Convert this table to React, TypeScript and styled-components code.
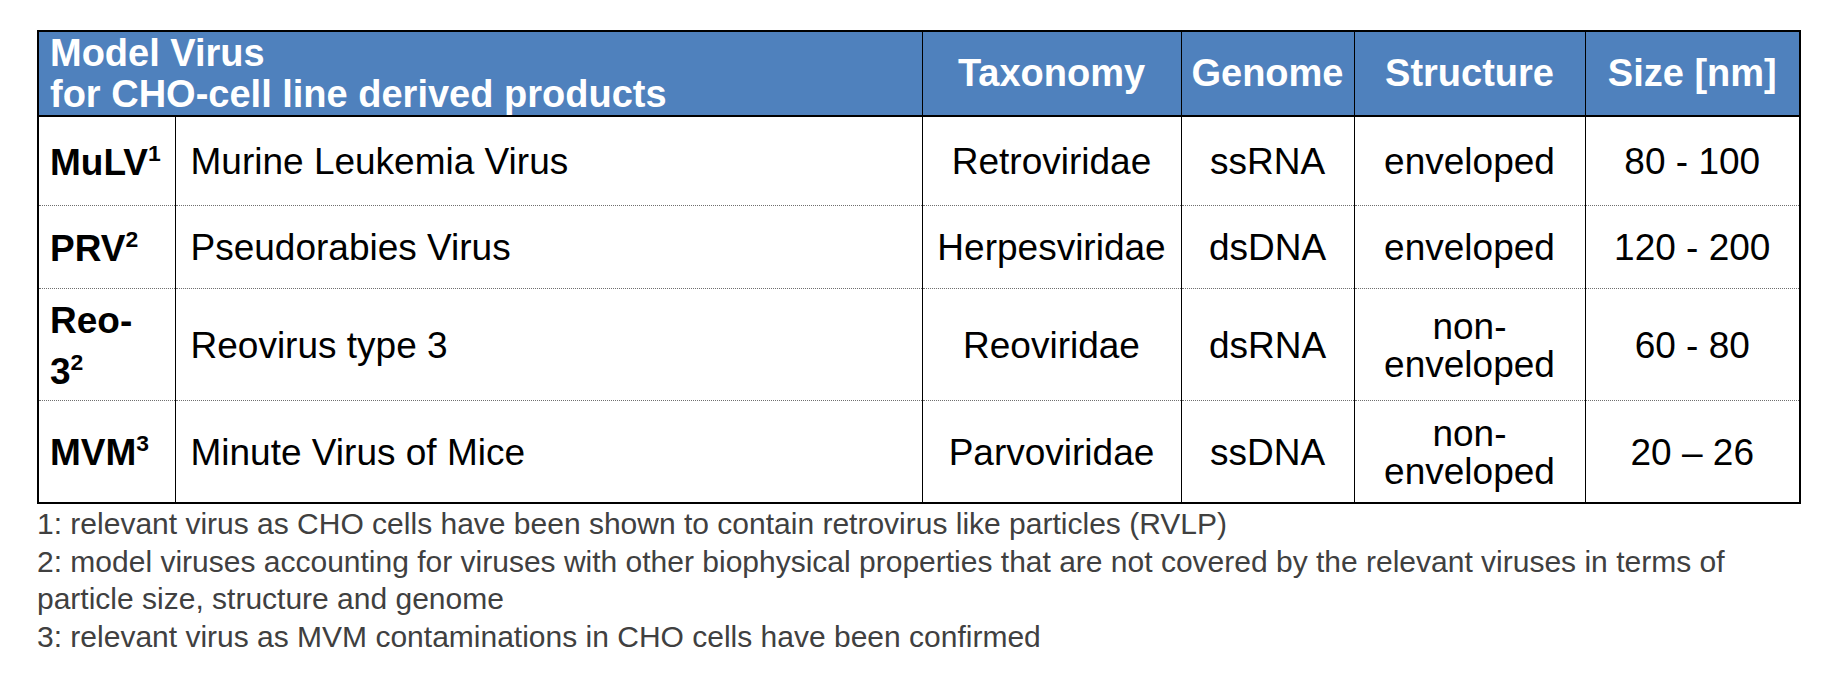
import styled, { createGlobalStyle } from 'styled-components'

const GlobalStyle = createGlobalStyle`
  body {
    margin: 0;
    background: #ffffff;
    font-family: "Liberation Sans", Arial, sans-serif;
  }
`

const Page = styled.div`
  width: 1836px;
  height: 678px;
  padding: 30px 0 0 37px;
  box-sizing: border-box;
  overflow: hidden;
`

const Sheet = styled.div`
  width: 1762px;
  display: flex;
  flex-direction: column;
`

const VirusTable = styled.table`
  width: 1762px;
  table-layout: fixed;
  border-collapse: collapse;
  border: 2px solid #000000;
`

const Col = styled.col<{ $width: number }>`
  width: ${(p) => p.$width}px;
`

const HeadCell = styled.th<{ $align?: 'left' | 'center' }>`
  height: 83px;
  padding: 0 0 0 ${(p) => (p.$align === 'left' ? '11px' : '0')};
  background: #4f81bd;
  color: #ffffff;
  font-size: 38px;
  font-weight: bold;
  line-height: 41px;
  text-align: ${(p) => p.$align ?? 'center'};
  vertical-align: middle;
  border-left: 1px solid #000000;
  border-right: 1px solid #000000;
  border-bottom: 2px solid #000000;
  white-space: nowrap;
`

const BodyRow = styled.tr<{ $height: number; $last: boolean }>`
  height: ${(p) => p.$height}px;

  & > td {
    border-bottom: ${(p) => (p.$last ? '2px solid #000000' : '1px dotted #6f6f6f')};
  }
`

const Cell = styled.td`
  padding: 3px 0 0;
  color: #000000;
  font-size: 37px;
  line-height: 38px;
  text-align: center;
  vertical-align: middle;
  border-left: 1px solid #000000;
  border-right: 1px solid #000000;
  white-space: nowrap;
`

const CodeCell = styled(Cell)`
  padding-left: 11px;
  font-weight: bold;
  line-height: 51px;
  text-align: left;
`

const NameCell = styled(Cell)`
  padding-left: 15px;
  text-align: left;
`

const Sup = styled.sup`
  font-size: 0.62em;
  line-height: 0;
  vertical-align: 0.62em;
`

const Notes = styled.div`
  display: flex;
  flex-direction: column;
  padding-top: 1px;
  color: #404040;
  font-size: 30px;
  line-height: 37.5px;
`

const Note = styled.p`
  margin: 0;
`

type Virus = {
  code: React.ReactNode
  name: string
  taxonomy: string
  genome: string
  structure: React.ReactNode
  size: string
  height: number
}

const nonEnveloped = (
  <>
    non-
    <br />
    enveloped
  </>
)

const viruses: Virus[] = [
  {
    code: (
      <>
        MuLV<Sup>1</Sup>
      </>
    ),
    name: 'Murine Leukemia Virus',
    taxonomy: 'Retroviridae',
    genome: 'ssRNA',
    structure: 'enveloped',
    size: '80 - 100',
    height: 89,
  },
  {
    code: (
      <>
        PRV<Sup>2</Sup>
      </>
    ),
    name: 'Pseudorabies Virus',
    taxonomy: 'Herpesviridae',
    genome: 'dsDNA',
    structure: 'enveloped',
    size: '120 - 200',
    height: 83,
  },
  {
    code: (
      <>
        Reo-
        <br />3<Sup>2</Sup>
      </>
    ),
    name: 'Reovirus type 3',
    taxonomy: 'Reoviridae',
    genome: 'dsRNA',
    structure: nonEnveloped,
    size: '60 - 80',
    height: 112,
  },
  {
    code: (
      <>
        MVM<Sup>3</Sup>
      </>
    ),
    name: 'Minute Virus of Mice',
    taxonomy: 'Parvoviridae',
    genome: 'ssDNA',
    structure: nonEnveloped,
    size: '20 – 26',
    height: 103,
  },
]

// widths of the six columns, measured off the slide
const columnWidths = [137, 747, 259, 173, 231, 215]

const App = () => {
  return (
    <Page>
      <GlobalStyle />
      <Sheet>
        <VirusTable>
          <colgroup>
            {columnWidths.map((w, i) => (
              <Col key={i} $width={w} />
            ))}
          </colgroup>
          <thead>
            <tr>
              <HeadCell colSpan={2} $align="left">
                Model Virus
                <br />
                for CHO-cell line derived products
              </HeadCell>
              <HeadCell>Taxonomy</HeadCell>
              <HeadCell>Genome</HeadCell>
              <HeadCell>Structure</HeadCell>
              <HeadCell>Size [nm]</HeadCell>
            </tr>
          </thead>
          <tbody>
            {viruses.map((v, i) => (
              <BodyRow key={i} $height={v.height} $last={i === viruses.length - 1}>
                <CodeCell>{v.code}</CodeCell>
                <NameCell>{v.name}</NameCell>
                <Cell>{v.taxonomy}</Cell>
                <Cell>{v.genome}</Cell>
                <Cell>{v.structure}</Cell>
                <Cell>{v.size}</Cell>
              </BodyRow>
            ))}
          </tbody>
        </VirusTable>
        <Notes>
          <Note>
            1: relevant virus as CHO cells have been shown to contain retrovirus like
            particles (RVLP)
          </Note>
          <Note>
            2: model viruses accounting for viruses with other biophysical properties
            that are not covered by the relevant viruses in terms of particle size,
            structure and genome
          </Note>
          <Note>
            3: relevant virus as MVM contaminations in CHO cells have been confirmed
          </Note>
        </Notes>
      </Sheet>
    </Page>
  )
}

export default App
